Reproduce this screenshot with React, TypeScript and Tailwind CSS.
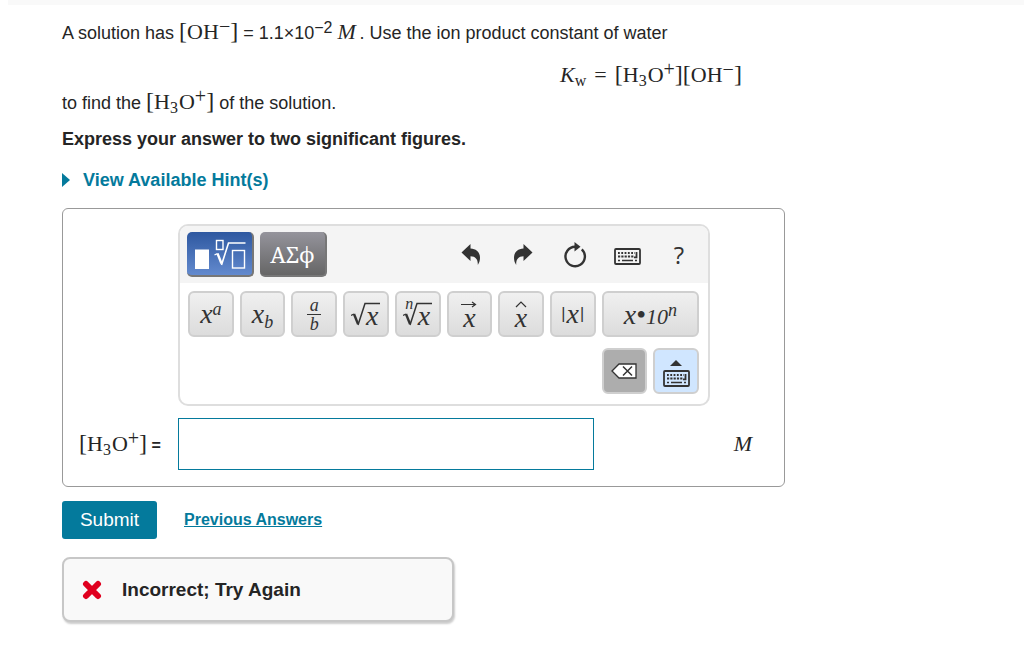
import { useState, type ReactNode } from "react";
import clsx from "clsx";

const mathFont = "font-['Liberation_Serif',serif]";
const bracket = "text-2xl leading-0";

function Hydroxide() {
  return (
    <span className={clsx(mathFont, "text-[22px] leading-0")}>
      <span className={bracket}>[</span>OH<sup className="text-xl leading-0 -top-1.5">−</sup>
      <span className={bracket}>]</span>
    </span>
  );
}

function Hydronium() {
  return (
    <span className={clsx(mathFont, "text-[22px] leading-0")}>
      <span className={bracket}>[</span>H<sub className="text-base leading-0">3</sub>
      <span className="pl-px">O</span>
      <sup className="text-xl leading-0 -top-1.5">+</sup>
      <span className={bracket}>]</span>
    </span>
  );
}

function KeyboardIcon({ className }: { className?: string }) {
  return (
    <svg viewBox="0 0 27 17" className={clsx("w-[27px] h-[17px]", className)} fill="none" stroke="currentColor" aria-hidden="true">
      <rect x="1" y="1" width="25" height="15" rx="1" strokeWidth="1.8" />
      <path d="M4 5h17" strokeWidth="1.8" strokeDasharray="1.8 1.5" />
      <path d="M4 8.5h16" strokeWidth="1.8" strokeDasharray="2.2 1.1" />
      <path d="M4 12.5h2M8 12.5h11M21 12.5h2" strokeWidth="1.5" />
      <path d="M22.5 4v5.3h-2.5" strokeWidth="1.8" />
    </svg>
  );
}

function UndoIcon({ className }: { className?: string }) {
  return (
    <svg viewBox="0 0 20 22" className={clsx("w-5 h-[22px]", className)} fill="currentColor" aria-hidden="true">
      <path d="M.5 8.5 9.5 0v4.5c6 .2 9.5 4 9.5 9.3 0 3-.8 5-2.2 7.2.3-5.5-2-8.6-7.3-8.8V17z" />
    </svg>
  );
}

function ResetIcon() {
  return (
    <svg viewBox="0 0 24 26" className="w-6 h-[26px]" fill="none" aria-hidden="true">
      <path d="M18.8 7.4A9.7 9.7 0 1 1 12 4.8" stroke="currentColor" strokeWidth="2.4" />
      <path d="M11.5 0v9.6l6-4.8z" fill="currentColor" />
    </svg>
  );
}

function TemplatesIcon() {
  return (
    <svg viewBox="0 0 52 30" className="w-[52px] h-[30px]" fill="none" stroke="white" aria-hidden="true">
      <path d="M1 10.5h14V30H1z" fill="white" stroke="none" />
      <rect x="22.5" y="1.5" width="6.5" height="9" strokeWidth="1.4" />
      <path d="M20.5 16l3-1.5" strokeWidth="1.3" />
      <path d="M23.5 14.5l4 10" strokeWidth="2.4" />
      <path d="M27.5 26 34.5 4h17" strokeWidth="1.6" />
      <rect x="38.5" y="11.5" width="12" height="17.5" strokeWidth="1.4" />
    </svg>
  );
}

function Radical({ index }: { index?: string }) {
  return (
    <span className="relative flex items-end">
      {index && <span className="absolute -top-1 left-0.5 text-base leading-3">{index}</span>}
      <svg viewBox="0 0 29 24" className="w-[29px] h-6" fill="none" stroke="currentColor" aria-hidden="true">
        <path d="M0 13.5 3 12" strokeWidth="1.2" />
        <path d="M3 12 7 22" strokeWidth="2.4" />
        <path d="M7 23 14 1.5h15" strokeWidth="1.5" />
      </svg>
      <span className="absolute right-0.5 bottom-0 text-[28px] leading-5">x</span>
    </span>
  );
}

function Accented({ mark }: { mark: "arrow" | "hat" }) {
  return (
    <span className="flex flex-col items-center">
      <svg viewBox="0 0 16 7" className="w-4 h-[7px]" fill="none" stroke="currentColor" strokeWidth="1.2" aria-hidden="true">
        {mark === "arrow" ? <path d="M0 3.5h14M11 1l3.5 2.5L11 6" /> : <path d="M3 6 8 1l5 5" />}
      </svg>
      <span className="text-[28px] leading-5">x</span>
    </span>
  );
}

const templates: { label: string; wide?: boolean; content: ReactNode }[] = [
  { label: "Superscript", content: <span className="text-[28px]">x<sup className="text-lg leading-0 -top-2">a</sup></span> },
  { label: "Subscript", content: <span className="text-[28px]">x<sub className="text-lg leading-0">b</sub></span> },
  {
    label: "Fraction",
    content: (
      <span className="flex flex-col items-center text-lg leading-[18px]">
        <span className="w-[14px] border-b border-current text-center">a</span>
        <span>b</span>
      </span>
    ),
  },
  { label: "Square root", content: <Radical /> },
  { label: "Nth root", content: <Radical index="n" /> },
  { label: "Vector", content: <Accented mark="arrow" /> },
  { label: "Unit vector", content: <Accented mark="hat" /> },
  {
    label: "Absolute value",
    content: (
      <span className="flex items-center gap-px text-[28px]">
        <span className="text-base not-italic font-['Liberation_Sans',sans-serif]">|</span>x
        <span className="text-base not-italic font-['Liberation_Sans',sans-serif]">|</span>
      </span>
    ),
  },
  {
    label: "Scientific notation",
    wide: true,
    content: (
      <span className="pt-1 text-[28px]">
        x•<span className="text-[22px]">10</span>
        <sup className="text-lg leading-0 -top-2">n</sup>
      </span>
    ),
  },
];

const keyClass = "flex h-[46px] items-center justify-center rounded-md border-2 border-[#cfcfcf]";
const toolClass = "flex w-[52px] h-8 items-center justify-center";
const tabClass = "flex w-[67px] h-[45px] items-center justify-center rounded-[5px] border-b-2 border-r-2 text-white";

function EquationToolbar() {
  return (
    <div className="w-full max-w-[532px] rounded-[10px] border-2 border-[#dedede] overflow-hidden">
      <div className="flex h-[57px] items-center justify-between bg-[#f4f4f4] pl-[7px] pr-[3px]">
        <div className="flex gap-[6px]">
          <button aria-label="Templates" className={clsx(tabClass, "border-[#777] bg-linear-to-b from-[#2e58a0] to-[#638ace]")}>
            <TemplatesIcon />
          </button>
          <button className={clsx(tabClass, "border-[#777] bg-linear-to-b from-[#95949c] to-[#666] font-['Noto_Serif',serif] text-[22px]")}>
            ΑΣϕ
          </button>
        </div>
        <div className="flex text-[#333]">
          <button aria-label="Undo" className={toolClass}><UndoIcon /></button>
          <button aria-label="Redo" className={toolClass}><UndoIcon className="-scale-x-100" /></button>
          <button aria-label="Reset" className={toolClass}><ResetIcon /></button>
          <button aria-label="Keyboard shortcuts" className={clsx(toolClass, "pt-1")}><KeyboardIcon /></button>
          <button aria-label="Help" className={clsx(toolClass, "font-['Open_Sans',sans-serif] text-2xl")}>?</button>
        </div>
      </div>
      <div className={clsx("grid grid-cols-10 gap-x-[6px] gap-y-[11px] pt-2 pb-[10px] pl-2 pr-[9px] text-[#333]", mathFont)}>
        {templates.map((t) => (
          <button
            key={t.label}
            aria-label={t.label}
            className={clsx(keyClass, "bg-linear-to-b from-[#f0f0f0] to-[#dcdcdc] italic", t.wide && "col-span-2")}
          >
            {t.content}
          </button>
        ))}
        <button aria-label="Delete" className={clsx(keyClass, "col-start-9 bg-[#adadad]")}>
          <svg viewBox="0 0 26 16" className="w-[26px] h-4" fill="white" stroke="currentColor" strokeWidth="1.3" aria-hidden="true">
            <path d="M1 8 8 1h17v14H8z" />
            <path d="m12 3.5 9 9m0-9-9 9" strokeWidth="1.5" />
          </svg>
        </button>
        <button aria-label="Hide keyboard" className={clsx(keyClass, "flex-col gap-1 bg-[#d0e6ff] pt-1")}>
          <svg viewBox="0 0 12 6" className="w-3 h-[6px]" fill="currentColor" aria-hidden="true">
            <path d="M0 6 6 0l6 6z" />
          </svg>
          <KeyboardIcon />
        </button>
      </div>
    </div>
  );
}

export default function App() {
  const [answer, setAnswer] = useState("");

  return (
    <div className="min-h-screen bg-white font-['Liberation_Sans',Arial,sans-serif] text-lg text-[#252525]">
      <div className="ml-2 h-[5px] bg-[#f9f9f9]" />
      <main className="pl-[62px] pt-[14px] leading-7">
        <p>
          A solution has <Hydroxide /> = 1.1×10<sup className="text-base leading-0 -top-1.5">−2</sup>{" "}
          <i className={clsx(mathFont, "text-[22px] leading-0")}>M</i>&thinsp;. Use the ion product constant of water
        </p>
        <p className={clsx(mathFont, "mt-[14px] pl-[216px] text-center text-[22px] leading-7")}>
          <i>K</i>
          <sub className="text-base leading-0">w</sub>
          <span className="px-2">=</span>
          <Hydronium /><Hydroxide />
        </p>
        <p>
          to find the <Hydronium /> of the solution.
        </p>
        <p className="mt-2 font-bold">Express your answer to two significant figures.</p>
        <button className="mt-[13px] flex items-center gap-[13px] font-bold text-[#047a9c]">
          <svg viewBox="0 0 8 14" className="w-2 h-[14px]" fill="currentColor" aria-hidden="true">
            <path d="M0 0l8 7-8 7z" />
          </svg>
          View Available Hint(s)
        </button>

        <section className="mt-[14px] w-full max-w-[723px] rounded-md border border-[#999] pt-[15px] pb-4">
          <div className="pl-[115px]">
            <EquationToolbar />
          </div>
          <div className="mt-3 flex items-center pl-4">
            <label htmlFor="answer" className="w-[99px] shrink-0 whitespace-nowrap pt-1 text-base font-bold">
              <span className="font-normal"><Hydronium /></span> =
            </label>
            <input
              id="answer"
              type="text"
              value={answer}
              onChange={(e) => setAnswer(e.target.value)}
              className="h-[52px] w-full max-w-[416px] border border-[#047a9c] px-3 outline-none"
            />
            <i className={clsx(mathFont, "ml-auto pr-8 text-[22px]")}>M</i>
          </div>
        </section>

        <div className="mt-[14px] flex items-center gap-[27px]">
          <button className="h-[38px] w-[95px] rounded-[3px] bg-[#047a9c] text-[19px] text-white">Submit</button>
          <a href="#previous" className="text-base font-bold text-[#047a9c] underline">Previous Answers</a>
        </div>

        <div
          role="status"
          className="mt-[18px] flex h-[65px] w-full max-w-[392px] items-center gap-5 rounded-lg border-2 border-[#c7c7c7] bg-[#f9f9f9] pl-[18px] text-[19px] font-bold shadow-[1px_2px_2px_rgba(0,0,0,0.2)]"
        >
          <svg viewBox="0 0 20 20" className="w-5 h-5" stroke="#e0001f" strokeWidth="6" strokeLinecap="round" aria-hidden="true">
            <path d="M4 4l12 12M16 4 4 16" />
          </svg>
          Incorrect; Try Again
        </div>
      </main>
    </div>
  );
}
